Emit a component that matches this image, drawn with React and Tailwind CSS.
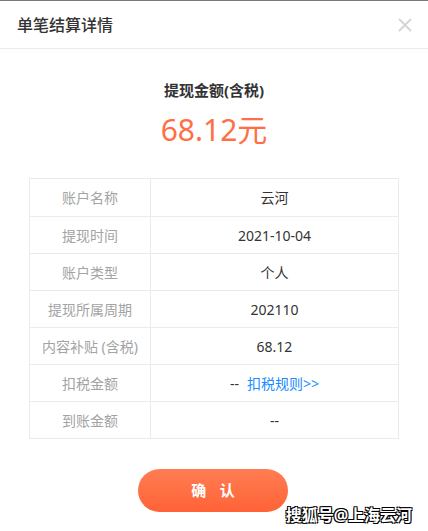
import React from 'react';

// 单笔结算详情弹窗
const rows = [
  { label: '账户名称', value: '云河' },
  { label: '提现时间', value: '2021-10-04' },
  { label: '账户类型', value: '个人' },
  { label: '提现所属周期', value: '202110' },
  { label: '内容补贴 (含税)', value: '68.12' },
  { label: '扣税金额', value: '--', link: '扣税规则>>' },
  { label: '到账金额', value: '--' },
];

const CloseIcon = () => (
  <svg width="14" height="14" viewBox="0 0 14 14" fill="none">
    <path d="M1.5 1.5 L12.5 12.5 M12.5 1.5 L1.5 12.5" stroke="#d4d4d4" strokeWidth="1.8" strokeLinecap="round" />
  </svg>
);

const App = () => {
  return (
    <div
      className="relative w-[428px] h-[531px] bg-white overflow-hidden"
      style={{ fontFamily: '"Noto Sans", "Noto Sans CJK SC", sans-serif' }}
    >
      <div className="h-px bg-[#7a7a7a]" />

      {/* 头部 */}
      <div className="h-[48px] flex items-center justify-between pl-[17px] pr-[13px] border-b border-[#ebebeb]">
        <h1 className="text-[16px] font-medium text-[#333] leading-none">单笔结算详情</h1>
        <button className="flex items-center justify-center w-5 h-5">
          <CloseIcon />
        </button>
      </div>

      {/* 金额 */}
      <div className="flex flex-col items-center pt-[30px]">
        <p className="text-[15px] font-bold text-[#333] leading-[22px]">提现金额(含税)</p>
        <p className="mt-[9px] text-[30px] text-[#ff6f45] leading-[40px]">68.12元</p>
      </div>

      {/* 明细表格 */}
      <div className="mt-[28px] ml-[29px] w-[370px] border border-[#ebebeb]">
        {rows.map((row, i) => (
          <div
            key={row.label}
            className={`flex h-[37px] text-[14px] ${i > 0 ? 'border-t border-[#ebebeb]' : ''}`}
          >
            <div className="w-[121px] flex items-center justify-center text-[#a3a3a3] border-r border-[#ebebeb]">
              {row.label}
            </div>
            <div className="flex-1 flex items-center justify-center text-[#333]">
              {row.value}
              {row.link && <a className="ml-[8px] text-[#1a8cff] cursor-pointer">{row.link}</a>}
            </div>
          </div>
        ))}
      </div>

      {/* 确认按钮 */}
      <div className="flex justify-center mt-[30px] pr-[2px]">
        <button className="w-[150px] h-[43px] rounded-full bg-gradient-to-b from-[#ff7d52] to-[#ff6236] text-white text-[15px] font-bold tracking-[0.9em] pl-[0.9em]">
          确认
        </button>
      </div>

      <div
        className="absolute right-[16px] bottom-[8px] text-[16px] font-bold text-white leading-none"
        style={{ textShadow: '1px 1px 0 #000, -1px -1px 0 #000, 1px -1px 0 #000, -1px 1px 0 #000' }}
      >
        搜狐号@上海云河
      </div>
    </div>
  );
};

export default App;
